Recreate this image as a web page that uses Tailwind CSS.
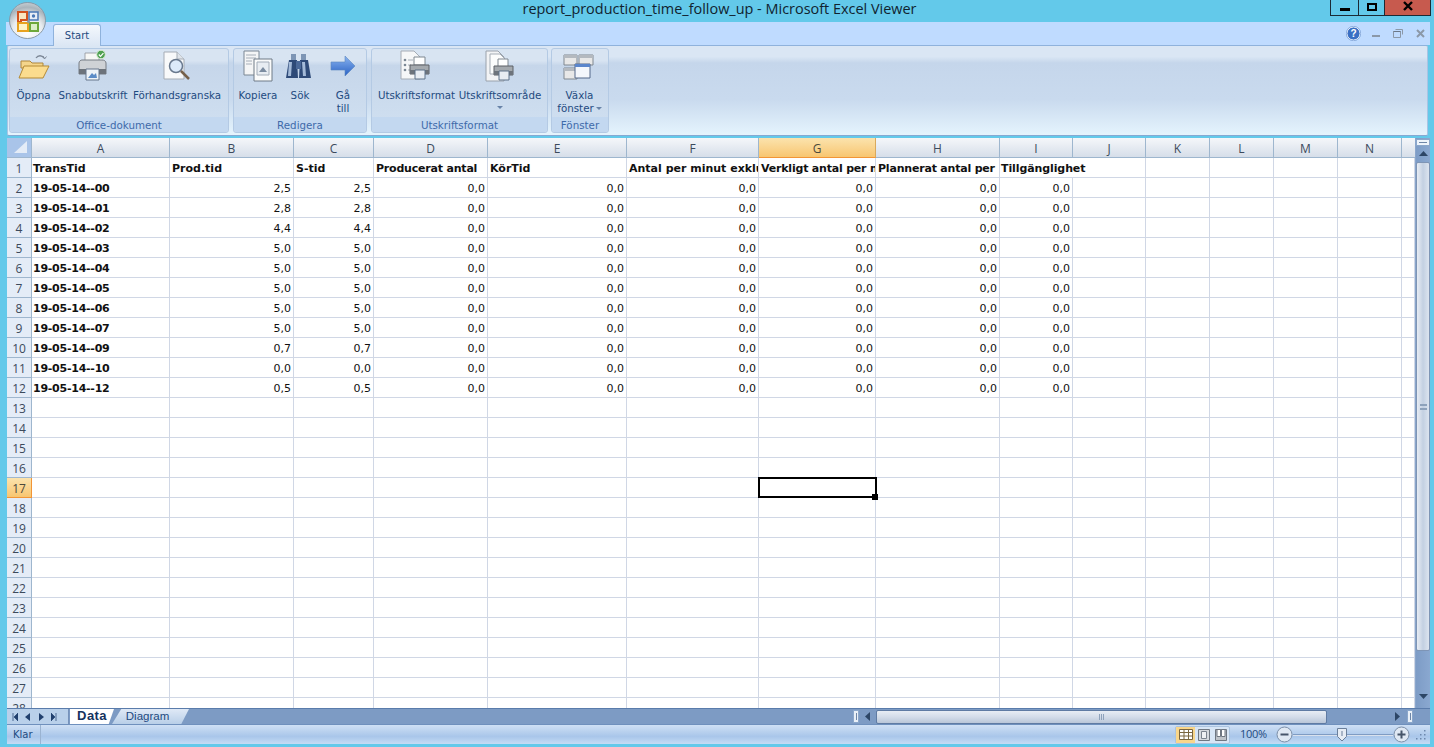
<!DOCTYPE html>
<html lang="sv"><head><meta charset="utf-8"><title>report_production_time_follow_up</title>
<script src="https://cdn.jsdelivr.net/npm/@tailwindcss/browser@4"></script></head>
<body class="w-[1434px] h-[747px] overflow-hidden bg-[#63c9ea] relative flex flex-col font-['DejaVu_Sans',sans-serif] text-[10.3px] text-[#1e4a80]">

<!-- Office button -->
<div class="absolute left-[9px] top-[2px] w-[37px] h-[37px] rounded-full border border-[#8a9aa8] bg-[radial-gradient(circle_at_50%_80%,#fff_0%,#e8ecef_45%,#aab4bb_72%,#dfe5e9_100%)] flex items-center justify-center z-10">
<svg width="24" height="24" viewBox="0 0 24 24" fill="none"><path d="M2 3h9v8H5v2H2z" fill="#fbe6c0" stroke="#d2531f" stroke-width="2"/><path d="M13 3h9v8h-9z" fill="#e8eef6" stroke="#4a78b5" stroke-width="1.5"/><path d="M2 14h10v8H2z" fill="#fdf3c7" stroke="#e7a21f" stroke-width="2"/><path d="M14 14h8v8h-8z" fill="#dcefc7" stroke="#6ea83a" stroke-width="2"/><circle cx="17.5" cy="7" r="1.7" fill="#4a78b5"/><circle cx="12.5" cy="12.5" r="1.5" fill="#8b9aa6"/></svg>
</div>

<!-- Title bar -->
<header class="h-[22px] shrink-0 relative flex items-start justify-center">
<span class="font-['Open_Sans',sans-serif] text-[14.45px] leading-[17px] text-[#10232f] ml-[5px] whitespace-nowrap">report_production_time_follow_up - Microsoft Excel Viewer</span>
<div class="absolute right-[3px] top-0 h-[16px] flex border-b border-l border-r border-[#1b2a35]">
<div class="w-[28px] flex items-center justify-center border-r border-[#1b2a35]"><div class="w-[10px] h-[3px] bg-black mt-[4px]"></div></div>
<div class="w-[25px] flex items-center justify-center"><div class="w-[10px] h-[8px] border-2 border-black mb-[2px]"></div></div>
<div class="w-[46px] bg-[#c75a4e] border-l border-[#1b2a35] flex justify-center"><svg width="10" height="10" viewBox="0 0 10 10" class="mt-[1px]"><path d="M1 1l8 8M9 1l-8 8" stroke="#000" stroke-width="2.4"/></svg></div>
</div>
</header>

<main class="ml-[6px] mr-[4px] w-[1424px] flex flex-col">
<!-- Tab strip -->
<div class="h-[23px] bg-[#bfdbff] relative flex items-end pl-[47px]">
<div class="w-[48px] h-[22px] mb-[-1px] z-[1] rounded-t-[3px] border border-b-0 border-[#8fb2dc] bg-gradient-to-b from-[#f4f8fd] to-[#dbe6f4] flex items-center justify-center text-[10px]">Start</div>
<div class="absolute right-0 top-0 h-[23px] flex items-center">
<svg width="15" height="15" viewBox="0 0 15 15" class="mr-[11px]"><circle cx="7.5" cy="7.5" r="6.6" fill="#3a6fc4" stroke="#fff" stroke-width="1"/><circle cx="7.5" cy="7.5" r="7.2" fill="none" stroke="#5d8ac9" stroke-width=".6"/><text x="7.5" y="11" text-anchor="middle" font-size="10" font-weight="700" fill="#fff" font-family="Liberation Sans">?</text></svg>
<div class="w-[8px] h-[2px] bg-[#8b98a8] mr-[13px] mt-[5px]"></div>
<svg width="10" height="9" viewBox="0 0 10 9" class="mr-[13px] mb-[1px]"><path d="M2.5.5h7v5M.5 2.5h7v6h-7z" fill="none" stroke="#8b98a8"/><path d="M.5 2.5h7" stroke="#6b7888"/></svg>
<svg width="9" height="9" viewBox="0 0 9 9" class="mr-[5px]"><path d="M1 1l7 7M8 1l-7 7" stroke="#8b98a8" stroke-width="2"/></svg>
</div>
</div>

<!-- Ribbon -->
<div class="h-[91px] mr-[2px] ml-px rounded-[2px] border border-t-[#8fb2dc] border-x-[#a9c4e4] border-b-[#86a9d2] bg-[linear-gradient(#dae6f4_0%,#dae6f4_12%,#c5d6eb_19%,#c9daee_60%,#e5f4fd_100%)] flex gap-[4px] pl-[1px] pt-[2px]">
<!-- Group 1 -->
<section class="w-[220px] h-[85px] rounded-[3px] border border-[#b4cae4] flex flex-col bg-[linear-gradient(#d8e4f2_0%,#d8e4f2_14%,#c6d6ea_20%,#d0e0f1_100%)]">
<div class="h-[68px] flex pl-[5px] text-center leading-[13px]">
<div class="w-[37px] flex flex-col items-center"><svg width="32" height="28" viewBox="0 0 32 28" class="mt-[4px] mb-[8px]" fill="none"><path d="M18 5c2-3 6-3 8 0" stroke="#7c8796" stroke-width="1.3"/><path d="M25 3l1.5 3 2-2.5" stroke="#7c8796" fill="none"/><path d="M3 8h9l2 2h11v5H3z" fill="#f4d58b" stroke="#b0873a"/><path d="M1 25L6 13h25l-6 12z" fill="#fbdc8e" stroke="#b58a35"/></svg><span>Öppna</span></div>
<div class="w-[72px] ml-[5px] flex flex-col items-center"><svg width="32" height="32" viewBox="0 0 32 32" class="mt-[1px] mb-[7px]" fill="none"><path d="M8 3h14v11H8z" fill="#f7f7f5" stroke="#8f939a" stroke-width=".8"/><path d="M2 13c0-2 2-3 3-3h20c2 0 4 1 4 3v11H2z" fill="#cfd2d6" stroke="#777c84"/><path d="M2 19h27v5H2z" fill="#6d737b"/><path d="M9 19h13v11H9z" fill="#eef3f8" stroke="#66778c"/><path d="M11 28l4-5 2 2 2-2 1 5z" fill="#5c8cc7"/><circle cx="24" cy="4.5" r="4.3" fill="#4fa052" stroke="#dcefd6"/><path d="M21.8 4.5l1.7 1.8 2.9-3.2" stroke="#fff" stroke-width="1.2"/></svg><span>Snabbutskrift</span></div>
<div class="w-[90px] ml-[3px] flex flex-col items-center whitespace-nowrap"><svg width="32" height="32" viewBox="0 0 32 32" class="mt-[1px] mb-[7px]" fill="none"><path d="M3 2h13l7 7v20H3z" fill="#f8f9fa" stroke="#a5acb5"/><path d="M16 2v7h7" fill="#dfe4ea" stroke="#a5acb5"/><circle cx="15" cy="16" r="6.5" fill="#dceafa" stroke="#68788d" stroke-width="1.5"/><path d="M20 21l8 8" stroke="#75604a" stroke-width="2.5"/></svg><span>Förhandsgranska</span></div>
</div>
<div class="h-[15px] rounded-b-[3px] bg-[#c3d8f0] text-center leading-[17px] text-[#3e6aaa]">Office-dokument</div>
</section>
<!-- Group 2 -->
<section class="w-[134px] h-[85px] rounded-[3px] border border-[#b4cae4] flex flex-col bg-[linear-gradient(#d8e4f2_0%,#d8e4f2_14%,#c6d6ea_20%,#d0e0f1_100%)]">
<div class="h-[68px] flex pl-[4px] text-center leading-[13px]">
<div class="w-[40px] flex flex-col items-center"><svg width="32" height="32" viewBox="0 0 32 32" class="mt-[1px] mb-[7px]" fill="none"><path d="M2 1h15v24H2z" fill="#f4f5f6" stroke="#7b8794"/><path d="M4 5h10M4 8h10M4 11h6M4 14h6" stroke="#a6aeb8"/><path d="M12 9h18v22H12z" fill="#fafbfb" stroke="#6f7a87"/><path d="M15 12h12v13H15z" fill="#e8edf2" stroke="#a2acb8"/><path d="M17 22l4-5 4 5z" fill="#7b8ca0"/></svg><span>Kopiera</span></div>
<div class="w-[30px] ml-[7px] flex flex-col items-center"><svg width="27" height="26" viewBox="0 0 27 26" class="mt-[4px] mb-[10px] mr-[3px]"><path d="M6 1h5v6H6zM16 1h5v6h-5z" fill="#7d95b5"/><path d="M4 7h8l1 18H1z" fill="#2e4a78"/><path d="M15 7h8l3 18H14z" fill="#2e4a78"/><path d="M4 9h3l-1 14H3zM17 9h3l1 14h-3z" fill="#a4bad8"/><path d="M11 8h5v8h-5z" fill="#4a6898"/></svg><span>Sök</span></div>
<div class="w-[30px] ml-[13px] flex flex-col items-center"><svg width="26" height="22" viewBox="0 0 26 22" class="mt-[6px] mb-[12px]"><defs><linearGradient id="ar" x1="0" y1="0" x2="0" y2="1"><stop offset="0" stop-color="#8ab4f0"/><stop offset="1" stop-color="#2a62c4"/></linearGradient></defs><path d="M1 7h14V1l10 10-10 10v-6H1z" fill="url(#ar)" stroke="#5d87c0" stroke-width=".6"/></svg><span>Gå<br>till</span></div>
</div>
<div class="h-[15px] rounded-b-[3px] bg-[#c3d8f0] text-center leading-[17px] text-[#3e6aaa]">Redigera</div>
</section>
<!-- Group 3 -->
<section class="w-[177px] h-[85px] rounded-[3px] border border-[#b4cae4] flex flex-col bg-[linear-gradient(#d8e4f2_0%,#d8e4f2_14%,#c6d6ea_20%,#d0e0f1_100%)]">
<div class="h-[68px] flex pl-[5px] text-center leading-[13px]">
<div class="w-[79px] flex flex-col items-center whitespace-nowrap"><svg width="32" height="32" viewBox="0 0 32 32" class="mt-[1px] mb-[7px] mr-[3px]" fill="none"><path d="M2 1h13l6 6v22H2z" fill="#f6f7f8" stroke="#a5acb5"/><circle cx="6" cy="10" r="1.3" fill="#7b8794"/><circle cx="6" cy="15" r="1.3" fill="#7b8794"/><circle cx="6" cy="20" r="1.3" fill="#7b8794"/><path d="M9 10h5M9 15h3M9 20h3" stroke="#a6aeb8"/><path d="M15 7h11v8H15z" fill="#fff" stroke="#7f8790"/><path d="M11 15h19v9H11z" fill="#a4a9ae" stroke="#5c6167"/><path d="M11 20h19v4H11z" fill="#6d737b"/><path d="M16 20h10v9H16z" fill="#e8edf3" stroke="#5f728a"/></svg><span>Utskriftsformat</span></div>
<div class="w-[84px] ml-[2px] flex flex-col items-center whitespace-nowrap"><svg width="32" height="32" viewBox="0 0 32 32" class="mt-[1px] mb-[7px]" fill="none"><path d="M2 1h12l6 6v24H2z" fill="#f2f3f5" stroke="#9aa2ac"/><path d="M6 4h10l6 6v14H6z" fill="#fbfcfc" stroke="#a5acb5"/><path d="M14 9h10v8H14z" fill="#fff" stroke="#7f8790"/><path d="M10 16h19v9H10z" fill="#a4a9ae" stroke="#5c6167"/><path d="M10 21h19v4H10z" fill="#6d737b"/><path d="M15 21h10v9H15z" fill="#e8edf3" stroke="#5f728a"/></svg><span>Utskriftsområde</span><svg width="6" height="4" viewBox="0 0 6 4" class="mt-[4px]"><path d="M0 0h6L3 3z" fill="#6883a8"/></svg></div>
</div>
<div class="h-[15px] rounded-b-[3px] bg-[#c3d8f0] text-center leading-[17px] text-[#3e6aaa]">Utskriftsformat</div>
</section>
<!-- Group 4 -->
<section class="w-[58px] ml-[-1px] h-[85px] rounded-[3px] border border-[#b4cae4] flex flex-col bg-[linear-gradient(#d8e4f2_0%,#d8e4f2_14%,#c6d6ea_20%,#d0e0f1_100%)]">
<div class="h-[68px] flex justify-center text-center leading-[13px] pr-[1px]">
<div class="flex flex-col items-center"><svg width="32" height="26" viewBox="0 0 32 26" class="mt-[5px] mb-[9px]" fill="none"><path d="M1 1h13v10H1z" fill="#e8e8e8" stroke="#808890"/><path d="M1 1h13v3H1z" fill="#b4b9bf"/><path d="M16 1h14v10H16z" fill="#e8e8e8" stroke="#808890"/><path d="M16 1h14v3H16z" fill="#b4b9bf"/><path d="M1 14h13v11H1z" fill="#e8e8e8" stroke="#808890"/><path d="M1 14h13v3H1z" fill="#b4b9bf"/><path d="M12 10h15v14H12z" fill="#f4f7fc" stroke="#54688a"/><path d="M12 10h15v3H12z" fill="#5b86cc"/></svg><span>Växla</span><span class="flex items-center whitespace-nowrap">fönster<svg width="6" height="4" viewBox="0 0 6 4" class="ml-[2px]"><path d="M0 0h6L3 3z" fill="#6883a8"/></svg></span></div>
</div>
<div class="h-[15px] rounded-b-[3px] bg-[#c3d8f0] text-center leading-[17px] text-[#3e6aaa]">Fönster</div>
</section>
</div>

<!-- Sheet -->
<div class="h-[570px] mt-[2px] ml-px flex overflow-hidden bg-white">
<div class="w-[1408px] h-[570px] overflow-hidden grid grid-cols-[25px_138px_124px_80px_114px_139px_132px_117px_124px_73px_73px_64px_64px_64px_64px_13px] auto-rows-[20px] text-[11px] leading-[21px] text-[#111] [&>div]:border-r [&>div]:border-b [&>div]:border-[#d0d7e5] [&>div]:pl-[2px] [&>div]:pr-[2px] [&>div]:overflow-hidden [&>div]:whitespace-nowrap">
<!-- header -->
<div class="!border-[#9eb6ce] bg-[#a9c4e9] relative"><svg width="16" height="14" viewBox="0 0 16 14" class="absolute right-[3px] bottom-[3px]"><path d="M15 1v12H2z" fill="#e4ecf7"/></svg></div>
<div class="!border-[#9eb6ce] bg-gradient-to-b from-[#f5f7fa] to-[#d6dee9] text-center font-['Open_Sans',sans-serif] text-[#3c4a5c] text-[12px]">A</div>
<div class="!border-[#9eb6ce] bg-gradient-to-b from-[#f5f7fa] to-[#d6dee9] text-center font-['Open_Sans',sans-serif] text-[#3c4a5c] text-[12px]">B</div>
<div class="!border-[#9eb6ce] bg-gradient-to-b from-[#f5f7fa] to-[#d6dee9] text-center font-['Open_Sans',sans-serif] text-[#3c4a5c] text-[12px]">C</div>
<div class="!border-[#9eb6ce] bg-gradient-to-b from-[#f5f7fa] to-[#d6dee9] text-center font-['Open_Sans',sans-serif] text-[#3c4a5c] text-[12px]">D</div>
<div class="!border-[#9eb6ce] bg-gradient-to-b from-[#f5f7fa] to-[#d6dee9] text-center font-['Open_Sans',sans-serif] text-[#3c4a5c] text-[12px]">E</div>
<div class="!border-[#9eb6ce] bg-gradient-to-b from-[#f5f7fa] to-[#d6dee9] text-center font-['Open_Sans',sans-serif] text-[#3c4a5c] text-[12px]">F</div>
<div class="!border-r-[#d9a95c] !border-b-[#f29536] bg-gradient-to-b from-[#fbe3ad] to-[#f8c670] text-center font-['Open_Sans',sans-serif] text-[#4c4a3c] text-[12px]">G</div>
<div class="!border-[#9eb6ce] bg-gradient-to-b from-[#f5f7fa] to-[#d6dee9] text-center font-['Open_Sans',sans-serif] text-[#3c4a5c] text-[12px]">H</div>
<div class="!border-[#9eb6ce] bg-gradient-to-b from-[#f5f7fa] to-[#d6dee9] text-center font-['Open_Sans',sans-serif] text-[#3c4a5c] text-[12px]">I</div>
<div class="!border-[#9eb6ce] bg-gradient-to-b from-[#f5f7fa] to-[#d6dee9] text-center font-['Open_Sans',sans-serif] text-[#3c4a5c] text-[12px]">J</div>
<div class="!border-[#9eb6ce] bg-gradient-to-b from-[#f5f7fa] to-[#d6dee9] text-center font-['Open_Sans',sans-serif] text-[#3c4a5c] text-[12px]">K</div>
<div class="!border-[#9eb6ce] bg-gradient-to-b from-[#f5f7fa] to-[#d6dee9] text-center font-['Open_Sans',sans-serif] text-[#3c4a5c] text-[12px]">L</div>
<div class="!border-[#9eb6ce] bg-gradient-to-b from-[#f5f7fa] to-[#d6dee9] text-center font-['Open_Sans',sans-serif] text-[#3c4a5c] text-[12px]">M</div>
<div class="!border-[#9eb6ce] bg-gradient-to-b from-[#f5f7fa] to-[#d6dee9] text-center font-['Open_Sans',sans-serif] text-[#3c4a5c] text-[12px]">N</div>
<div class="!border-b-[#9eb6ce] !border-r-0 bg-gradient-to-b from-[#f5f7fa] to-[#d6dee9]"></div>
<!-- row 1 -->
<div class="!border-[#9eb6ce] bg-[#e4ecf7] text-center font-['Open_Sans',sans-serif] text-[#3c4a5c] text-[12px]">1</div>
<div class="font-bold !pl-[1px]">TransTid</div><div class="font-bold">Prod.tid</div><div class="font-bold">S-tid</div><div class="font-bold tracking-[-.2px]">Producerat antal</div><div class="font-bold">KörTid</div><div class="font-bold">Antal per minut exklu</div><div class="font-bold tracking-[-.2px]">Verkligt antal per m</div><div class="font-bold tracking-[-.2px]">Plannerat antal per</div><div class="font-bold !pl-[1px] !overflow-visible !border-r-0 tracking-[-.1px]">Tillgänglighet</div><div></div><div></div><div></div><div></div><div></div><div></div>
<!-- data rows -->
<div class="!border-[#9eb6ce] bg-[#e4ecf7] text-center font-['Open_Sans',sans-serif] text-[#3c4a5c] text-[12px]">2</div>
<div class="font-bold !pl-[1px] tracking-[-.25px]">19-05-14--00</div><div class="text-right">2,5</div><div class="text-right">2,5</div><div class="text-right">0,0</div><div class="text-right">0,0</div><div class="text-right">0,0</div><div class="text-right">0,0</div><div class="text-right">0,0</div><div class="text-right">0,0</div><div></div><div></div><div></div><div></div><div></div><div></div>
<div class="!border-[#9eb6ce] bg-[#e4ecf7] text-center font-['Open_Sans',sans-serif] text-[#3c4a5c] text-[12px]">3</div>
<div class="font-bold !pl-[1px] tracking-[-.25px]">19-05-14--01</div><div class="text-right">2,8</div><div class="text-right">2,8</div><div class="text-right">0,0</div><div class="text-right">0,0</div><div class="text-right">0,0</div><div class="text-right">0,0</div><div class="text-right">0,0</div><div class="text-right">0,0</div><div></div><div></div><div></div><div></div><div></div><div></div>
<div class="!border-[#9eb6ce] bg-[#e4ecf7] text-center font-['Open_Sans',sans-serif] text-[#3c4a5c] text-[12px]">4</div>
<div class="font-bold !pl-[1px] tracking-[-.25px]">19-05-14--02</div><div class="text-right">4,4</div><div class="text-right">4,4</div><div class="text-right">0,0</div><div class="text-right">0,0</div><div class="text-right">0,0</div><div class="text-right">0,0</div><div class="text-right">0,0</div><div class="text-right">0,0</div><div></div><div></div><div></div><div></div><div></div><div></div>
<div class="!border-[#9eb6ce] bg-[#e4ecf7] text-center font-['Open_Sans',sans-serif] text-[#3c4a5c] text-[12px]">5</div>
<div class="font-bold !pl-[1px] tracking-[-.25px]">19-05-14--03</div><div class="text-right">5,0</div><div class="text-right">5,0</div><div class="text-right">0,0</div><div class="text-right">0,0</div><div class="text-right">0,0</div><div class="text-right">0,0</div><div class="text-right">0,0</div><div class="text-right">0,0</div><div></div><div></div><div></div><div></div><div></div><div></div>
<div class="!border-[#9eb6ce] bg-[#e4ecf7] text-center font-['Open_Sans',sans-serif] text-[#3c4a5c] text-[12px]">6</div>
<div class="font-bold !pl-[1px] tracking-[-.25px]">19-05-14--04</div><div class="text-right">5,0</div><div class="text-right">5,0</div><div class="text-right">0,0</div><div class="text-right">0,0</div><div class="text-right">0,0</div><div class="text-right">0,0</div><div class="text-right">0,0</div><div class="text-right">0,0</div><div></div><div></div><div></div><div></div><div></div><div></div>
<div class="!border-[#9eb6ce] bg-[#e4ecf7] text-center font-['Open_Sans',sans-serif] text-[#3c4a5c] text-[12px]">7</div>
<div class="font-bold !pl-[1px] tracking-[-.25px]">19-05-14--05</div><div class="text-right">5,0</div><div class="text-right">5,0</div><div class="text-right">0,0</div><div class="text-right">0,0</div><div class="text-right">0,0</div><div class="text-right">0,0</div><div class="text-right">0,0</div><div class="text-right">0,0</div><div></div><div></div><div></div><div></div><div></div><div></div>
<div class="!border-[#9eb6ce] bg-[#e4ecf7] text-center font-['Open_Sans',sans-serif] text-[#3c4a5c] text-[12px]">8</div>
<div class="font-bold !pl-[1px] tracking-[-.25px]">19-05-14--06</div><div class="text-right">5,0</div><div class="text-right">5,0</div><div class="text-right">0,0</div><div class="text-right">0,0</div><div class="text-right">0,0</div><div class="text-right">0,0</div><div class="text-right">0,0</div><div class="text-right">0,0</div><div></div><div></div><div></div><div></div><div></div><div></div>
<div class="!border-[#9eb6ce] bg-[#e4ecf7] text-center font-['Open_Sans',sans-serif] text-[#3c4a5c] text-[12px]">9</div>
<div class="font-bold !pl-[1px] tracking-[-.25px]">19-05-14--07</div><div class="text-right">5,0</div><div class="text-right">5,0</div><div class="text-right">0,0</div><div class="text-right">0,0</div><div class="text-right">0,0</div><div class="text-right">0,0</div><div class="text-right">0,0</div><div class="text-right">0,0</div><div></div><div></div><div></div><div></div><div></div><div></div>
<div class="!border-[#9eb6ce] bg-[#e4ecf7] text-center font-['Open_Sans',sans-serif] text-[#3c4a5c] text-[12px]">10</div>
<div class="font-bold !pl-[1px] tracking-[-.25px]">19-05-14--09</div><div class="text-right">0,7</div><div class="text-right">0,7</div><div class="text-right">0,0</div><div class="text-right">0,0</div><div class="text-right">0,0</div><div class="text-right">0,0</div><div class="text-right">0,0</div><div class="text-right">0,0</div><div></div><div></div><div></div><div></div><div></div><div></div>
<div class="!border-[#9eb6ce] bg-[#e4ecf7] text-center font-['Open_Sans',sans-serif] text-[#3c4a5c] text-[12px]">11</div>
<div class="font-bold !pl-[1px] tracking-[-.25px]">19-05-14--10</div><div class="text-right">0,0</div><div class="text-right">0,0</div><div class="text-right">0,0</div><div class="text-right">0,0</div><div class="text-right">0,0</div><div class="text-right">0,0</div><div class="text-right">0,0</div><div class="text-right">0,0</div><div></div><div></div><div></div><div></div><div></div><div></div>
<div class="!border-[#9eb6ce] bg-[#e4ecf7] text-center font-['Open_Sans',sans-serif] text-[#3c4a5c] text-[12px]">12</div>
<div class="font-bold !pl-[1px] tracking-[-.25px]">19-05-14--12</div><div class="text-right">0,5</div><div class="text-right">0,5</div><div class="text-right">0,0</div><div class="text-right">0,0</div><div class="text-right">0,0</div><div class="text-right">0,0</div><div class="text-right">0,0</div><div class="text-right">0,0</div><div></div><div></div><div></div><div></div><div></div><div></div>
<!-- empty rows -->
<div class="!border-[#9eb6ce] bg-[#e4ecf7] text-center font-['Open_Sans',sans-serif] text-[#3c4a5c] text-[12px]">13</div><div></div><div></div><div></div><div></div><div></div><div></div><div></div><div></div><div></div><div></div><div></div><div></div><div></div><div></div><div></div>
<div class="!border-[#9eb6ce] bg-[#e4ecf7] text-center font-['Open_Sans',sans-serif] text-[#3c4a5c] text-[12px]">14</div><div></div><div></div><div></div><div></div><div></div><div></div><div></div><div></div><div></div><div></div><div></div><div></div><div></div><div></div><div></div>
<div class="!border-[#9eb6ce] bg-[#e4ecf7] text-center font-['Open_Sans',sans-serif] text-[#3c4a5c] text-[12px]">15</div><div></div><div></div><div></div><div></div><div></div><div></div><div></div><div></div><div></div><div></div><div></div><div></div><div></div><div></div><div></div>
<div class="!border-[#9eb6ce] bg-[#e4ecf7] text-center font-['Open_Sans',sans-serif] text-[#3c4a5c] text-[12px]">16</div><div></div><div></div><div></div><div></div><div></div><div></div><div></div><div></div><div></div><div></div><div></div><div></div><div></div><div></div><div></div>
<div class="!border-b-[#f29536] !border-r-[#f29536] bg-gradient-to-b from-[#fbe3ad] to-[#f8c670] text-center font-['Open_Sans',sans-serif] text-[#4c4a3c] text-[12px]">17</div><div></div><div></div><div></div><div></div><div></div><div></div>
<div class="relative !overflow-visible"><div class="absolute left-[-1px] top-[-1px] w-[119px] h-[21px] border-2 border-black z-[2]"></div><div class="absolute right-[-3px] bottom-[-3px] w-[6px] h-[6px] bg-black z-[3]"></div></div>
<div></div><div></div><div></div><div></div><div></div><div></div><div></div><div></div>
<div class="!border-[#9eb6ce] bg-[#e4ecf7] text-center font-['Open_Sans',sans-serif] text-[#3c4a5c] text-[12px]">18</div><div></div><div></div><div></div><div></div><div></div><div></div><div></div><div></div><div></div><div></div><div></div><div></div><div></div><div></div><div></div>
<div class="!border-[#9eb6ce] bg-[#e4ecf7] text-center font-['Open_Sans',sans-serif] text-[#3c4a5c] text-[12px]">19</div><div></div><div></div><div></div><div></div><div></div><div></div><div></div><div></div><div></div><div></div><div></div><div></div><div></div><div></div><div></div>
<div class="!border-[#9eb6ce] bg-[#e4ecf7] text-center font-['Open_Sans',sans-serif] text-[#3c4a5c] text-[12px]">20</div><div></div><div></div><div></div><div></div><div></div><div></div><div></div><div></div><div></div><div></div><div></div><div></div><div></div><div></div><div></div>
<div class="!border-[#9eb6ce] bg-[#e4ecf7] text-center font-['Open_Sans',sans-serif] text-[#3c4a5c] text-[12px]">21</div><div></div><div></div><div></div><div></div><div></div><div></div><div></div><div></div><div></div><div></div><div></div><div></div><div></div><div></div><div></div>
<div class="!border-[#9eb6ce] bg-[#e4ecf7] text-center font-['Open_Sans',sans-serif] text-[#3c4a5c] text-[12px]">22</div><div></div><div></div><div></div><div></div><div></div><div></div><div></div><div></div><div></div><div></div><div></div><div></div><div></div><div></div><div></div>
<div class="!border-[#9eb6ce] bg-[#e4ecf7] text-center font-['Open_Sans',sans-serif] text-[#3c4a5c] text-[12px]">23</div><div></div><div></div><div></div><div></div><div></div><div></div><div></div><div></div><div></div><div></div><div></div><div></div><div></div><div></div><div></div>
<div class="!border-[#9eb6ce] bg-[#e4ecf7] text-center font-['Open_Sans',sans-serif] text-[#3c4a5c] text-[12px]">24</div><div></div><div></div><div></div><div></div><div></div><div></div><div></div><div></div><div></div><div></div><div></div><div></div><div></div><div></div><div></div>
<div class="!border-[#9eb6ce] bg-[#e4ecf7] text-center font-['Open_Sans',sans-serif] text-[#3c4a5c] text-[12px]">25</div><div></div><div></div><div></div><div></div><div></div><div></div><div></div><div></div><div></div><div></div><div></div><div></div><div></div><div></div><div></div>
<div class="!border-[#9eb6ce] bg-[#e4ecf7] text-center font-['Open_Sans',sans-serif] text-[#3c4a5c] text-[12px]">26</div><div></div><div></div><div></div><div></div><div></div><div></div><div></div><div></div><div></div><div></div><div></div><div></div><div></div><div></div><div></div>
<div class="!border-[#9eb6ce] bg-[#e4ecf7] text-center font-['Open_Sans',sans-serif] text-[#3c4a5c] text-[12px]">27</div><div></div><div></div><div></div><div></div><div></div><div></div><div></div><div></div><div></div><div></div><div></div><div></div><div></div><div></div><div></div>
<div class="!border-[#9eb6ce] bg-[#e4ecf7] text-center font-['Open_Sans',sans-serif] text-[#3c4a5c] text-[12px]">28</div><div></div><div></div><div></div><div></div><div></div><div></div><div></div><div></div><div></div><div></div><div></div><div></div><div></div><div></div><div></div>
</div>
<!-- Vertical scrollbar -->
<div class="w-[15px] h-[570px] bg-[linear-gradient(90deg,#7d9cc6,#8aa8d0)] flex flex-col items-center border-l border-[#8aa6cc]">
<div class="w-[14px] h-[7px] mt-px bg-[#eef4fb] border border-[#8ba7cb] flex items-center justify-center"><div class="w-[8px] h-px bg-[#6f87a8]"></div></div>
<svg width="9" height="5" viewBox="0 0 9 5" class="mt-[5px]"><path d="M0 5h9L4.500 0z" fill="#2d4666"/></svg>
<div class="w-[14px] h-[489px] mt-[6px] rounded-[2px] border border-[#7e95b5] bg-[linear-gradient(90deg,#e8edf4,#c3d0e2_50%,#dce4ef)] flex items-center justify-center">
<div class="w-[7px] h-[6px] border-y-2 border-y-[#8ea2bb] border-double"></div></div>
<svg width="9" height="5" viewBox="0 0 9 5" class="mt-[43px]"><path d="M0 0h9L4.500 5z" fill="#2d4666"/></svg>
</div>
</div>

<!-- Sheet tab bar -->
<div class="h-[16px] ml-px flex bg-[#7d9bc4] border-t border-[#5a7cab] overflow-hidden">
<div class="w-[62px] h-[15px] flex items-center gap-[7px] pl-[5px] bg-[#b9d0ea] border-r border-[#7692bb]">
<svg width="6" height="8" viewBox="0 0 6 8"><path d="M1 0v8M6 0v8L2 4z" fill="#21406e" stroke="#21406e" stroke-width=".7"/></svg>
<svg width="5" height="8" viewBox="0 0 5 8"><path d="M5 0v8L0 4z" fill="#21406e"/></svg>
<svg width="5" height="8" viewBox="0 0 5 8" class="ml-[2px]"><path d="M0 0v8l5-4z" fill="#21406e"/></svg>
<svg width="6" height="8" viewBox="0 0 6 8"><path d="M5 0v8M0 0v8l4-4z" fill="#21406e" stroke="#21406e" stroke-width=".7"/></svg>
</div>
<div class="flex relative">
<div class="w-[44px] h-[15px] bg-white z-[2] ml-px text-center font-['Liberation_Sans',sans-serif] font-bold text-[13px] leading-[14px] text-[#15325e] [clip-path:polygon(0_0,100%_0,88%_100%,0_100%)] tracking-[.4px]">Data</div>
<div class="w-[77px] h-[15px] ml-[-2px] pr-[6px] bg-[linear-gradient(#dfe9f6,#b9cfe8)] text-center font-['Liberation_Sans',sans-serif] text-[11.5px] leading-[14px] text-[#1e4a80] [clip-path:polygon(12%_0,100%_0,90%_100%,0_100%)]">Diagram</div>
</div>
<div class="ml-auto w-[577px] h-[15px] flex items-center relative">
<div class="w-[6px] h-[13px] bg-[#e9f0f8] border border-[#8ba7cb] flex items-center justify-center"><div class="w-px h-[7px] bg-[#6f87a8]"></div></div>
<svg width="5" height="9" viewBox="0 0 5 9" class="ml-[6px]"><path d="M5 0v9L0 4.500z" fill="#2d4666"/></svg>
<div class="w-[451px] h-[14px] ml-[6px] rounded-[2px] border border-[#5f7ba3] bg-[linear-gradient(#e8edf4,#d3dce9_50%,#b9c6d8)] flex items-center justify-center"><div class="w-[6px] h-[6px] bg-[repeating-linear-gradient(90deg,#8ea2bb_0,#8ea2bb_1px,transparent_1px,transparent_2px)]"></div></div>
<svg width="5" height="9" viewBox="0 0 5 9" class="ml-[68px]"><path d="M0 0v9l5-4.500z" fill="#2d4666"/></svg>
<div class="w-[6px] h-[13px] ml-[7px] bg-[#e9f0f8] border border-[#8ba7cb] flex items-center justify-center"><div class="w-px h-[7px] bg-[#6f87a8]"></div></div>
</div>
</div>

<!-- Status bar -->
<footer class="h-[20px] ml-px border-t border-[#6f90bd] bg-[linear-gradient(#cfe0f5,#bcd3ef_30%,#a9c6ea_60%,#c4dcf5)] flex items-center relative">
<div class="w-[34px] h-full border-r border-[#9ab3d1] pl-[6px] leading-[19px] text-[10px]">Klar</div>
<div class="absolute right-0 top-0 h-full flex items-center">
<div class="h-[18px] flex border border-[#aac3df] rounded-[2px] bg-[#d8e6f6] mr-[10px]">
<div class="w-[19px] flex items-center justify-center bg-[#f9d68a]"><svg width="14" height="11" viewBox="0 0 14 11" fill="none"><path d="M.5.500h13v10H.5zM.5 3.500h13M.5 7h13M5 .5v10M9.500 .5v10" stroke="#7a6640" fill="#fff"/></svg></div>
<div class="w-[17px] flex items-center justify-center"><svg width="12" height="12" viewBox="0 0 12 12" fill="none"><path d="M.5.500h11v11H.5z" fill="#d5d9de" stroke="#6f7782"/><path d="M3.500 2.500h5v7h-5z" fill="#eef0f3" stroke="#7b838e"/></svg></div>
<div class="w-[17px] flex items-center justify-center"><svg width="12" height="12" viewBox="0 0 12 12" fill="none"><path d="M.5.500h11v11H.5z" fill="#bfc4ca" stroke="#6f7782"/><path d="M2 .5h3.500v7H2zM6.500 .5H10v7H6.500z" fill="#fff" stroke="#6f7782"/></svg></div>
</div>
<span class="w-[36px] font-['Open_Sans',sans-serif] text-[11px] tracking-[-.3px] text-[#1e4a80]">100%</span>
<svg width="17" height="17" viewBox="0 0 17 17" fill="none"><circle cx="8.500" cy="8.500" r="7.500" fill="#dfe8f3" stroke="#7c8fa8"/><path d="M4.500 8.500h8" stroke="#46556a" stroke-width="2"/></svg>
<div class="w-[100px] h-[2px] bg-[#7f9cc3] relative border-b border-white/70"><svg width="10" height="14" viewBox="0 0 10 14" class="absolute left-[44px] top-[-6px]"><path d="M.5.500h9v8L5 13 .5 8.500z" fill="#e6ecf4" stroke="#6a7f9b"/><path d="M5 3v5" stroke="#6a7f9b"/></svg></div>
<svg width="17" height="17" viewBox="0 0 17 17" fill="none"><circle cx="8.500" cy="8.500" r="7.500" fill="#dfe8f3" stroke="#7c8fa8"/><path d="M4.500 8.500h8M8.500 4.500v8" stroke="#46556a" stroke-width="2"/></svg>
<svg width="11" height="11" viewBox="0 0 11 11" class="ml-[5px] mr-[4px]"><path d="M9 1h1.500v1.500H9zM9 5h1.500v1.500H9zM5 5h1.500v1.500H5zM9 9h1.500v1.500H9zM5 9h1.500v1.500H5zM1 9h1.500v1.500H1z" fill="#6d88ad"/></svg>
</div>
</footer>
</main>
</body></html>
